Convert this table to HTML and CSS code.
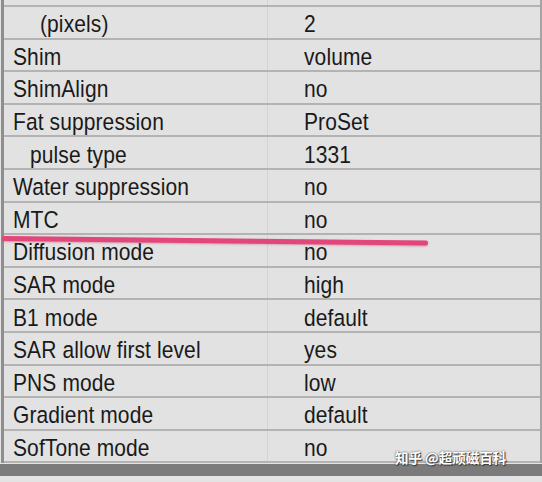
FILE: index.html
```html
<!DOCTYPE html>
<html>
<head>
<meta charset="utf-8">
<link rel="stylesheet" href="styles.css">
</head>
<body>
<div class="panel">
  <div class="table">
    <div class="row top"><span class="k"></span><span class="v"></span></div>
    <div class="row"><span class="k in2"><span class="t">(pixels)</span></span><span class="v"><span class="t">2</span></span></div>
    <div class="row"><span class="k"><span class="t">Shim</span></span><span class="v"><span class="t">volume</span></span></div>
    <div class="row"><span class="k"><span class="t">ShimAlign</span></span><span class="v"><span class="t">no</span></span></div>
    <div class="row"><span class="k"><span class="t">Fat suppression</span></span><span class="v"><span class="t">ProSet</span></span></div>
    <div class="row"><span class="k in1"><span class="t">pulse type</span></span><span class="v"><span class="t">1331</span></span></div>
    <div class="row"><span class="k"><span class="t">Water suppression</span></span><span class="v"><span class="t">no</span></span></div>
    <div class="row"><span class="k"><span class="t">MTC</span></span><span class="v"><span class="t">no</span></span></div>
    <div class="row"><span class="k"><span class="t">Diffusion mode</span></span><span class="v"><span class="t">no</span></span></div>
    <div class="row"><span class="k"><span class="t">SAR mode</span></span><span class="v"><span class="t">high</span></span></div>
    <div class="row"><span class="k"><span class="t">B1 mode</span></span><span class="v"><span class="t">default</span></span></div>
    <div class="row"><span class="k"><span class="t">SAR allow first level</span></span><span class="v"><span class="t">yes</span></span></div>
    <div class="row"><span class="k"><span class="t">PNS mode</span></span><span class="v"><span class="t">low</span></span></div>
    <div class="row"><span class="k"><span class="t">Gradient mode</span></span><span class="v"><span class="t">default</span></span></div>
    <div class="row"><span class="k"><span class="t">SofTone mode</span></span><span class="v"><span class="t">no</span></span></div>
  </div>
  <div class="bar"></div>
  <div class="pink"></div>
  <div class="wm">知乎 @超顽磁百科</div>
</div>
</body>
</html>
```
FILE: styles.css
```css
html, body {
  margin: 0;
  padding: 0;
  background: #e6e6e6;
}
.panel {
  position: relative;
  width: 542px;
  height: 482px;
  overflow: hidden;
  background: #e3e3e3;
  font-family: "Liberation Sans", Arial, sans-serif;
  font-size: 21px;
  color: #1a1a1a;
}
.table {
  margin-left: 1px;
  width: 536px;
  border-left: 3px solid #8e8e8e;
  border-right: 2px solid #a4a4a4;
  background: #e2e2e2;
}
.row {
  display: grid;
  grid-template-columns: 264px 1fr;
  height: 32.6px;
  box-sizing: border-box;
  border-bottom: 2px solid #b3b3b3;
  align-items: center;
}
.row.top {
  height: 7px;
}
.k {
  padding-left: 9px;
  border-right: 1px solid #d3d3d3;
  height: 100%;
  display: flex;
  align-items: center;
  white-space: nowrap;
}
.k.in1 { padding-left: 26px; }
.k.in2 { padding-left: 36px; }
.v {
  padding-left: 36px;
  white-space: nowrap;
}
.t {
  display: inline-block;
  transform: translateY(2px) scaleY(1.13);
  transform-origin: 0 60%;
  letter-spacing: 0.1px;
}
.bar {
  height: 12px;
  margin-top: 1px;
  background: #7b7b7b;
}
.pink {
  position: absolute;
  left: 2px;
  top: 236px;
  width: 426px;
  height: 5px;
  border-radius: 2px;
  background: #e2477a;
  transform-origin: 0 50%;
  transform: rotate(0.6deg);
  box-shadow: 0 1px 2px rgba(200, 60, 100, 0.4);
}
.wm {
  position: absolute;
  left: 395px;
  top: 447px;
  font-family: "Noto Sans CJK SC", sans-serif;
  font-size: 13.5px;
  font-weight: 700;
  color: #ffffff;
  text-shadow: 0 0 2px #444, 1px 1px 1px #333;
  white-space: nowrap;
}
```
